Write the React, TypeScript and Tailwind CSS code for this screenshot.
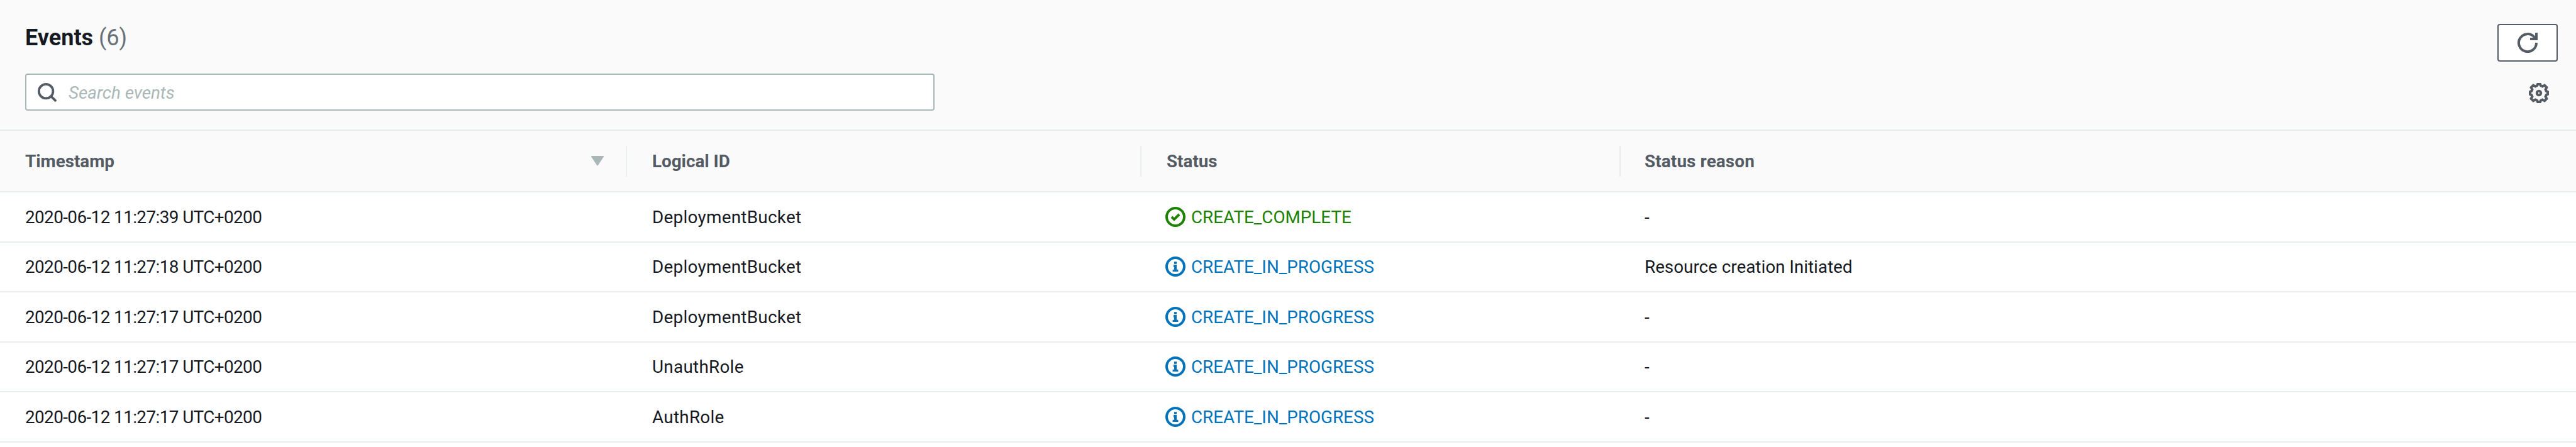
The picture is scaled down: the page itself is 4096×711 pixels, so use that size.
const rows = [
  ["2020-06-12 11:27:39 UTC+0200", "DeploymentBucket", "CREATE_COMPLETE", "-"],
  ["2020-06-12 11:27:18 UTC+0200", "DeploymentBucket", "CREATE_IN_PROGRESS", "Resource creation Initiated"],
  ["2020-06-12 11:27:17 UTC+0200", "DeploymentBucket", "CREATE_IN_PROGRESS", "-"],
  ["2020-06-12 11:27:17 UTC+0200", "UnauthRole", "CREATE_IN_PROGRESS", "-"],
  ["2020-06-12 11:27:17 UTC+0200", "AuthRole", "CREATE_IN_PROGRESS", "-"],
];

function StatusIcon({ ok }: { ok: boolean }) {
  return (
    <svg viewBox="0 0 16 16" className="w-[32px] h-[32px] shrink-0" fill="none" stroke="currentColor" strokeWidth="2">
      <circle cx="8" cy="8" r="7" />
      {ok ? (
        <path d="M5 8l2 2 4-4" />
      ) : (
        <>
          <path d="M8 11V7.500H6.500" strokeWidth="2" />
          <path d="M5.800 11.200h4.400" strokeWidth="1.600" />
          <path d="M7 5h2" strokeWidth="1.800" />
        </>
      )}
    </svg>
  );
}

export default function App() {
  return (
    <div className="w-[4096px] h-[711px] overflow-hidden bg-white text-[#16191f] font-['Roboto',sans-serif]">
      <div className="h-[208px] bg-[#fafafa] border-b-2 border-[#eaeded] flex justify-between pl-[40px] pr-[29px]">
        <div className="flex flex-col">
          <div className="mt-[38px] h-[44px] leading-[44px] text-[36px]">
            <span className="font-bold">Events</span> <span className="text-[#687078]">(6)</span>
          </div>
          <div className="mt-[35px] w-[1446px] h-[59px] bg-white border-2 border-[#aab7b8] rounded-[4px] flex items-center pl-[18px] gap-[19px]">
            <svg viewBox="0 0 16 16" className="w-[30px] h-[30px]" fill="none" stroke="#545b64" strokeWidth="2">
              <circle cx="7" cy="7" r="6" />
              <path d="M11 11l4.500 4.500" />
            </svg>
            <span className="italic text-[27.800px] pt-[2px] text-[#aab7b8]">Search events</span>
          </div>
        </div>
        <div className="flex flex-col items-end">
          <div className="mt-[38px] w-[96px] h-[60px] bg-white border-2 border-[#545b64] rounded-[4px] flex items-center justify-center">
            <svg viewBox="0 0 16 16" className="w-[32px] h-[32px]" fill="none" stroke="#545b64" strokeWidth="2">
              <path d="M10 5h5V0" />
              <path d="M15 8a7 7 0 1 1-1.600-4.400L15 5" />
            </svg>
          </div>
          <svg viewBox="0 0 16 16" className="mt-[34px] mr-[14px] w-[32px] h-[32px]" fill="none" stroke="#545b64" strokeWidth="2">
            <path d="M13.300 5.200l.9-1.700-1.700-1.700-1.700.9c-.4-.2-.8-.4-1.200-.5L9 1H7l-.6 1.200c-.4.1-.8.3-1.200.5l-1.700-.9-1.700 1.700.9 1.700c-.2.4-.4.8-.5 1.200L1 7v2l1.200.6c.1.4.3.8.5 1.200l-.9 1.700 1.700 1.700 1.700-.9c.4.2.8.4 1.200.5L7 15h2l.6-1.200c.4-.1.8-.3 1.200-.5l1.700.9 1.700-1.700-.9-1.700c.2-.4.4-.8.5-1.200L15 9V7l-1.200-.6c-.1-.4-.3-.8-.5-1.200z" />
            <circle cx="8" cy="8" r="1.600" />
          </svg>
        </div>
      </div>
      <div className="h-[98px] bg-[#fafafa] border-b-2 border-[#eaeded] grid grid-cols-[995px_818px_762px_1fr] text-[27.800px] font-bold text-[#545b64]">
        <div className="flex items-center justify-between pl-[40px] pr-[35px]">
          <span className="pt-[2px]">Timestamp</span>
          <svg viewBox="0 0 20 16" className="w-[20px] h-[16px]"><path d="M1 0h18a1 1 0 0 1 .8 1.500L10.800 15a1 1 0 0 1-1.600 0L.2 1.500A1 1 0 0 1 1 0z" fill="#aab7b8" /></svg>
        </div>
        <div className="flex items-center">
          <div className="h-[49px] border-l-2 border-[#eaeded] pl-[40px] flex items-center pt-[2px]">Logical ID</div>
        </div>
        <div className="flex items-center">
          <div className="h-[49px] border-l-2 border-[#eaeded] pl-[40px] flex items-center pt-[2px]">Status</div>
        </div>
        <div className="flex items-center">
          <div className="h-[49px] border-l-2 border-[#eaeded] pl-[38px] flex items-center pt-[2px] tracking-[0.15px]">Status reason</div>
        </div>
      </div>
      {rows.map((r, i) => (
        <div key={i} className="h-[79.500px] border-b-2 border-[#eaeded] grid grid-cols-[995px_818px_762px_1fr] items-center text-[27.800px]">
          <div className="pl-[40px] pt-[2px] tracking-[-0.56px]">{r[0]}</div>
          <div className="pl-[42px] pt-[2px] tracking-[0.3px]">{r[1]}</div>
          <div className={`pl-[40px] flex items-center gap-[9px] ${i === 0 ? "text-[#1d8102]" : "text-[#0073bb]"}`}>
            <StatusIcon ok={i === 0} />
            <span className="pt-[2px]">{r[2]}</span>
          </div>
          <div className="pl-[40px] pt-[2px]">{r[3]}</div>
        </div>
      ))}
    </div>
  );
}
